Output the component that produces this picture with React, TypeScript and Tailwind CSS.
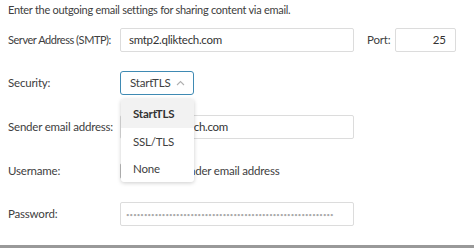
import React from "react";

const font = { fontFamily: "Lato, 'Noto Sans', sans-serif" };

function Label({ children, tight }: { children: React.ReactNode; tight?: boolean }) {
  return (
    <div
      className={
        tight
          ? "w-[112px] shrink-0 whitespace-nowrap text-[11px] tracking-[-0.45px] text-[#404040]"
          : "w-[112px] shrink-0 whitespace-nowrap text-[11.5px] tracking-[-0.2px] text-[#404040]"
      }
    >
      {children}
    </div>
  );
}

export default function App() {
  return (
    <div className="relative h-[248px] w-[474px] bg-white flex flex-col overflow-hidden" style={font}>
      <div className="px-2 pt-[3px] flex flex-col">
        <div className="text-[11px] tracking-[-0.28px] leading-[14px] whitespace-nowrap text-[#404040]">
          Enter the outgoing email settings for sharing content via email.
        </div>

        <div className="mt-[11px] flex items-center h-6">
          <Label tight>Server Address (SMTP):</Label>
          <div className="w-[234px] h-6 border border-[#dcdcdc] rounded-[2px] pl-2 flex items-center text-[11.5px] tracking-[-0.3px] text-[#333]">
            smtp2.qliktech.com
          </div>
          <div className="ml-[13px] w-[28px] text-[11.5px] tracking-[-0.2px] text-[#404040]">Port:</div>
          <div className="w-[61px] h-6 border border-[#dcdcdc] rounded-[2px] pr-[9px] flex items-center justify-end text-[11.5px] text-[#333]">
            25
          </div>
        </div>

        <div className="mt-[19px] flex items-center h-6">
          <Label>Security:</Label>
          <div className="w-[74px] h-6 border border-[#3f8ab3] rounded-[3px] pl-[9px] flex items-center text-[11.5px] tracking-[-0.2px] text-[#404040]">
            <span>StartTLS</span>
            <svg className="ml-[6px]" width="9" height="6" viewBox="0 0 9 6" fill="none">
              <path d="M1 5 L4.5 1.5 L8 5" stroke="#b0b0b0" strokeWidth="1.1" />
            </svg>
          </div>
        </div>

        <div className="mt-[20px] flex items-center h-6">
          <Label>Sender email address:</Label>
          <div className="w-[234px] h-6 border border-[#dcdcdc] rounded-[2px] pl-2 flex items-center text-[11.5px] tracking-[-0.3px] text-[#333]">
            admin@qliktech.com
          </div>
        </div>

        <div className="mt-[20px] flex items-center h-6">
          <Label>Username:</Label>
          <div className="flex items-center gap-[21px] text-[11.5px] tracking-[-0.2px] text-[#404040]">
            <div className="w-4 h-4 border border-[#bbb] rounded-[2px]" />
            <span>Use sender email address</span>
          </div>
        </div>

        <div className="mt-[19px] flex items-center h-6">
          <Label>Password:</Label>
          <div className="w-[234px] h-6 border border-[#dcdcdc] rounded-[2px] pl-[5px] flex items-center overflow-hidden whitespace-nowrap text-[6px] tracking-[0.1px] text-[#aaa]">
            {"•".repeat(58)}
          </div>
        </div>
      </div>

      <div className="mt-auto h-[3px] bg-[#999]" />

      <div className="absolute left-[121px] top-[99px] w-[73px] h-[83px] bg-white rounded-[3px] shadow-[0_1px_4px_rgba(0,0,0,0.2)] flex flex-col text-[11.5px] tracking-[-0.2px] text-[#404040] overflow-hidden">
        <div className="h-[29px] bg-[#f2f2f2] flex items-center pl-3 font-bold text-[#333]">StartTLS</div>
        <div className="h-[28px] flex items-center pl-3">SSL/TLS</div>
        <div className="h-[26px] flex items-center pl-3">None</div>
      </div>
    </div>
  );
}
